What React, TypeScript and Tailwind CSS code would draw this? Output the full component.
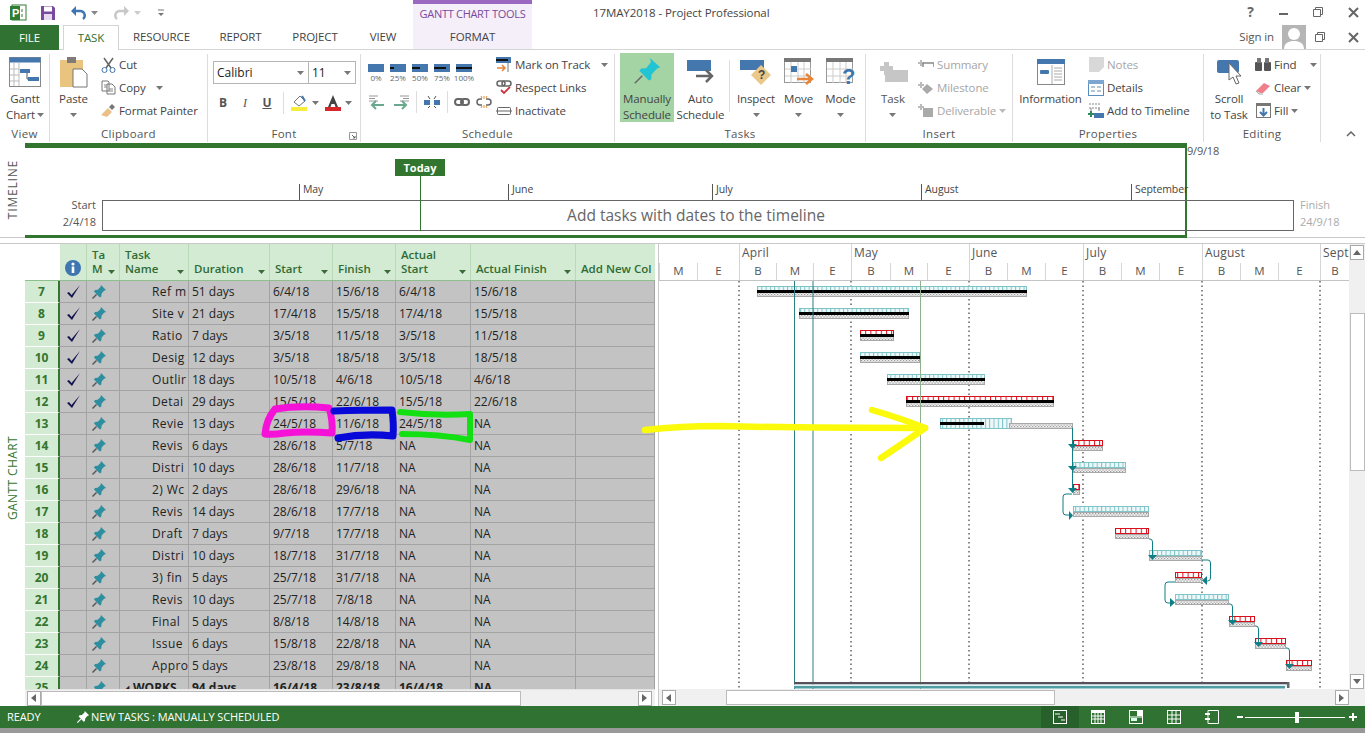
import React from "react";

const BLUE = "#4477ad";

const Caret = ({ c = "#777" }: { c?: string }) => (
  <svg width="7" height="4" viewBox="0 0 7 4" className="shrink-0"><path d="M0 0h7L3.5 4z" fill={c} /></svg>
);

const Large = ({ w, icon, lines, caret, active }: { w: number; icon: React.ReactNode; lines: React.ReactNode[]; caret?: boolean; active?: boolean }) => (
  <div style={{ width: w }} className={`flex flex-col items-center h-[69px] mt-[-1px] shrink-0 ${active ? "bg-[#a4d3a4]" : ""}`}>
    <div className="h-[38px] shrink-0 flex items-center justify-center">{icon}</div>
    <div className="text-[11.5px] leading-[16px] tracking-[-0.1px] text-center whitespace-nowrap">
      {lines.map((l, i) => <div key={i}>{l}</div>)}
      {caret && <div className="flex justify-center h-[16px] items-center"><Caret /></div>}
    </div>
  </div>
);

const Small = ({ icon, label, caret, dim, gap = "gap-[3px]" }: { icon: React.ReactNode; label: string; caret?: React.ReactNode; dim?: boolean; gap?: string }) => (
  <div className={`flex items-center h-[23px] -translate-y-[1px] ${gap} whitespace-nowrap text-[11.5px] tracking-[-0.1px] ${dim ? "text-[#a6a6a6]" : ""}`}>
    <span className="w-[16px] h-[16px] flex items-center justify-center shrink-0">{icon}</span>
    <span>{label}</span>
    {caret}
  </div>
);

const Group = ({ w, label, children, launcher }: { w: number; label: string; children: React.ReactNode; launcher?: boolean }) => (
  <div style={{ width: w }} className="shrink-0 h-[88px] flex flex-col border-r border-[#dcdcdc] mt-[4px] relative">
    <div className="flex h-[72px] items-start">{children}</div>
    <div className="text-[11.5px] leading-[16px] text-center text-[#555] tracking-[0.3px]">{label}</div>
    {launcher && (
      <svg width="8" height="8" viewBox="0 0 8 8" className="absolute right-[3px] bottom-[2px]"><path d="M.5.5h7v7h-7z" fill="none" stroke="#999" /><path d="M3 3l3 3M6 4v2H4" stroke="#666" fill="none" /></svg>
    )}
  </div>
);

const Pin = ({ c = "#2eaab5", s = 16 }: { c?: string; s?: number }) => (
  <svg width={s} height={s} viewBox="0 0 16 16" className="shrink-0">
    <path d="M10 1l5 5-2 .8-2.500 3-.2 2.700-1.500 1L3 7.500l1-1.500 2.700-.2L9.500 3z" fill={c} />
    <path d="M5.500 10.500L1.500 14.500" stroke={c === "#fff" ? "#fff" : "#555"} strokeWidth="1.400" />
  </svg>
);

const Pct = ({ label, dash }: { label: string; dash: number }) => (
  <div className="flex flex-col items-center w-[22px]">
    <svg width="16" height="8" viewBox="0 0 16 8"><rect width="16" height="8" fill={BLUE} />{dash > 0 && <rect y="3" width={dash} height="2" fill="#111" />}</svg>
    <span className="text-[8px] leading-[12px] text-[#666]">{label}</span>
  </div>
);

const Sq = ({ children, cls = "" }: { children: React.ReactNode; cls?: string }) => (
  <div className={`w-[14px] h-[15px] border border-[#aaa] bg-white flex items-center justify-center shrink-0 ${cls}`}>{children}</div>
);

const rows: [number, string, string, string, string, string, string, boolean][] = [
  [7, "Ref m", "51 days", "6/4/18", "15/6/18", "6/4/18", "15/6/18", true],
  [8, "Site v", "21 days", "17/4/18", "15/5/18", "17/4/18", "15/5/18", true],
  [9, "Ratio", "7 days", "3/5/18", "11/5/18", "3/5/18", "11/5/18", true],
  [10, "Desig", "12 days", "3/5/18", "18/5/18", "3/5/18", "18/5/18", true],
  [11, "Outlir", "18 days", "10/5/18", "4/6/18", "10/5/18", "4/6/18", true],
  [12, "Detai", "29 days", "15/5/18", "22/6/18", "15/5/18", "22/6/18", true],
  [13, "Revie", "13 days", "24/5/18", "11/6/18", "24/5/18", "NA", false],
  [14, "Revis", "6 days", "28/6/18", "5/7/18", "NA", "NA", false],
  [15, "Distri", "10 days", "28/6/18", "11/7/18", "NA", "NA", false],
  [16, "2) Wc", "2 days", "28/6/18", "29/6/18", "NA", "NA", false],
  [17, "Revis", "14 days", "28/6/18", "17/7/18", "NA", "NA", false],
  [18, "Draft", "7 days", "9/7/18", "17/7/18", "NA", "NA", false],
  [19, "Distri", "10 days", "18/7/18", "31/7/18", "NA", "NA", false],
  [20, "3) fin", "5 days", "25/7/18", "31/7/18", "NA", "NA", false],
  [21, "Revis", "10 days", "25/7/18", "7/8/18", "NA", "NA", false],
  [22, "Final", "5 days", "8/8/18", "14/8/18", "NA", "NA", false],
  [23, "Issue", "6 days", "15/8/18", "22/8/18", "NA", "NA", false],
  [24, "Appro", "5 days", "23/8/18", "29/8/18", "NA", "NA", false],
];

const cols = "grid grid-cols-[35px_27px_33px_69px_81px_63px_63px_75px_105px_79px]";

const Head = ({ children, cls = "" }: { children: React.ReactNode; cls?: string }) => (
  <div className={`relative border-r border-[#b9d9b9] px-[5px] pb-[4px] flex items-end font-semibold text-[#2f6b35] text-[11.5px] leading-[14px] overflow-hidden bg-[#d3ebd2] ${cls}`}>
    {children}
  </div>
);
const HCaret = () => <span className="absolute right-[4px] bottom-[6px]"><Caret c="#3b6b3b" /></span>;

const Cell = ({ children, bold, cls = "" }: { children?: React.ReactNode; bold?: boolean; cls?: string }) => (
  <div className={`border-r border-b border-[#a3a3a3] px-[3px] flex items-center whitespace-nowrap overflow-hidden text-[12px] text-[#222] ${bold ? "font-bold" : ""} ${cls}`}>
    {children}
  </div>
);

const tiers: { w: number; t: string; m?: string }[] = [
  { w: 38, t: "M" }, { w: 42, t: "E" }, { w: 37, t: "B", m: "April" }, { w: 37, t: "M" }, { w: 38, t: "E" },
  { w: 39, t: "B", m: "May" }, { w: 37, t: "M" }, { w: 42, t: "E" }, { w: 38, t: "B", m: "June" }, { w: 38, t: "M" },
  { w: 38, t: "E" }, { w: 38, t: "B", m: "July" }, { w: 38, t: "M" }, { w: 43, t: "E" }, { w: 38, t: "B", m: "August" },
  { w: 38, t: "M" }, { w: 42, t: "E" }, { w: 29, t: "B", m: "Sept" },
];

type Bar = { x: number; x2: number; y: number; red?: boolean; black?: number };
const bars: Bar[] = [
  { x: 757, x2: 1027, y: 286, black: 1027 },
  { x: 799, x2: 909, y: 308, black: 909 },
  { x: 860, x2: 894, y: 330, red: true, black: 894 },
  { x: 860, x2: 920, y: 352, black: 920 },
  { x: 887, x2: 985, y: 374, black: 985 },
  { x: 906, x2: 1054, y: 396, red: true, black: 1054 },
  { x: 1073, x2: 1103, y: 440, red: true },
  { x: 1073, x2: 1126, y: 462 },
  { x: 1073, x2: 1080, y: 484, red: true },
  { x: 1073, x2: 1149, y: 506 },
  { x: 1115, x2: 1149, y: 528, red: true },
  { x: 1149, x2: 1202, y: 550 },
  { x: 1175, x2: 1202, y: 572, red: true },
  { x: 1175, x2: 1229, y: 594 },
  { x: 1229, x2: 1255, y: 616, red: true },
  { x: 1255, x2: 1286, y: 638, red: true },
  { x: 1286, x2: 1312, y: 660, red: true },
];

const TEAL = "#0f7f86";
const tris = [
  "1068,444 1077,444 1072.5,449", "1068,466 1077,466 1072.5,471", "1068,488 1077,488 1072.5,493",
  "1069,511 1069,520 1073,515.5", "1148,555 1157,555 1152.5,560", "1207,576 1207,585 1202,580.5",
  "1170,598 1170,607 1175,602.5", "1228,620 1237,620 1232.5,625", "1254,642 1263,642 1258.5,647", "1285,664 1294,664 1289.5,669",
];
const links = [
  "M1073 428h-.5V488",
  "M1072 494h-6q-3 0-3 3v15q0 3 3 3h3",
  "M1149 539h1q2.500 0 2.500 3v13",
  "M1202 560h6q2.500 0 2.500 3v15q0 3-3 3h-2",
  "M1175 582h-7q-3 0-3 3v15q0 3 3 3h2",
  "M1229 604h1q2.500 0 2.500 3v13",
  "M1255 626h1q2.500 0 2.500 3v13",
  "M1286 648h1q2.500 0 2.500 3v13",
];

const Chart = () => (
  <svg width="690" height="408" viewBox="659 281 690 408" className="block">
    <defs>
      <pattern id="hT" width="4.3" height="6" patternUnits="userSpaceOnUse" x="757"><rect width="4.3" height="6" fill="#eef8f8" /><rect width="1" height="6" fill="#7fc4c8" /></pattern>
      <pattern id="hR" width="5.2" height="6" patternUnits="userSpaceOnUse" x="860"><rect width="5.2" height="6" fill="#fff" /><rect width="1" height="6" fill="#d8101c" /></pattern>
      <pattern id="dots" width="3" height="3" patternUnits="userSpaceOnUse"><rect width="3" height="3" fill="#f0f0f0" /><rect width="1.2" height="1.2" fill="#9a9a9a" /><rect x="1.500" y="1.500" width="1.200" height="1.200" fill="#9a9a9a" /></pattern>
    </defs>
    {[739, 851, 969, 1083, 1202, 1320].map((x) => <line key={x} x1={x} x2={x} y1="281" y2="689" stroke="#111" strokeDasharray="1.5 3" />)}
    {bars.map((b, i) => {
      const w = b.x2 - b.x;
      return (
        <g key={i}>
          <rect x={b.x + 0.5} y={b.y + 0.5} width={w - 1} height="5" fill={b.red ? "url(#hR)" : "url(#hT)"} stroke={b.red ? "#d8101c" : "#7fc4c8"} />
          <rect x={b.x + 0.5} y={b.y + 6.5} width={w - 1} height="4" fill="url(#dots)" stroke="#a8a8a8" />
          {b.black && <rect x={b.x} y={b.y + 4} width={b.black - b.x} height="3" fill="#000" />}
        </g>
      );
    })}
    <rect x="940.500" y="418.500" width="71" height="10" fill="url(#hT)" stroke="#7fc4c8" />
    <rect x="1009.500" y="423.500" width="63" height="5" fill="url(#dots)" stroke="#a8a8a8" />
    <rect x="940" y="422" width="44" height="3" fill="#000" />
    <line x1="794.500" x2="794.500" y1="281" y2="689" stroke="#2a7f83" />
    <line x1="813" x2="813" y1="281" y2="689" stroke="#2a7f83" />
    <line x1="920.500" x2="920.500" y1="281" y2="689" stroke="#8fb08f" />
    {links.map((d, i) => <path key={i} d={d} fill="none" stroke={TEAL} strokeWidth="1" />)}
    {tris.map((p, i) => <polygon key={i} points={p} fill={TEAL} />)}
    <rect x="794" y="682" width="495" height="2.500" fill="#55505a" />
    <rect x="794" y="684.500" width="495" height="2" fill="#dff3f5" />
    <rect x="794" y="686" width="491" height="2.500" fill="#4f9da3" />
    <rect x="1287" y="682" width="2.500" height="6" fill="#666" />
  </svg>
);

const Ink = () => (
  <svg width="1365" height="733" viewBox="0 0 1365 733" className="absolute left-0 top-0 pointer-events-none" fill="none" strokeLinecap="round" strokeLinejoin="round">
    <path d="M275 409Q300 405 329 408Q333 420 332 433Q305 431 285 433Q272 435 265 434Q266 420 275 409Z" stroke="#f511d8" strokeWidth="7" />
    <path d="M334 411Q360 410 392 410Q394 424 393 436Q365 433 338 438" stroke="#0808d8" strokeWidth="7" />
    <path d="M400 412Q435 416 470 414Q470 428 470 440Q440 434 402 434" stroke="#12e012" strokeWidth="6" />
    <path d="M645 430Q680 426 720 426Q800 428 925 428" stroke="#fafa0a" strokeWidth="6.500" />
    <path d="M872 410Q900 418 925 428Q905 442 881 458" stroke="#fafa0a" strokeWidth="6.500" />
  </svg>
);

const Restore = () => <svg width="10" height="10" viewBox="0 0 10 10"><path d="M.5 2.500h7v7h-7zM2.500 2.500v-2h7v7h-2" fill="none" stroke="#666" /></svg>;
const Close = () => <svg width="11" height="11" viewBox="0 0 11 11"><path d="M1 1l9 9M10 1l-9 9" stroke="#666" strokeWidth="2" /></svg>;

function Caret4({ dir }: { dir: "l" | "r" | "u" | "d" }) {
  const d = { l: "M6 0v8L1 4z", r: "M1 0v8l5-4z", u: "M0 6h8L4 1z", d: "M0 1h8L4 6z" }[dir];
  return <svg width="8" height="8" viewBox="0 0 8 8"><path d={d} fill="#666" /></svg>;
}

export default function App() {
  return (
    <div className="relative w-[1365px] h-[733px] overflow-hidden bg-white text-[#444] font-['Open_Sans','Noto_Sans',sans-serif]">
      {/* title bar */}
      <div className="flex h-[25px] items-center relative">
        <div className="w-[413px] flex items-center pl-[9px] gap-[13px] shrink-0">
          <svg width="18" height="18" viewBox="0 0 18 18"><rect x="3" y="1" width="14" height="15" fill="#fff" stroke="#2f7d32" /><rect x="1" y="2" width="10" height="14" fill="#2f7d32" /><text x="3" y="13" fontSize="11" fontWeight="700" fill="#fff" fontFamily="Liberation Sans">P</text><path d="M13 5v3M13 10v3" stroke="#2f7d32" /></svg>
          <svg width="16" height="16" viewBox="0 0 16 16"><path d="M1 1h12l2 2v12H1z" fill="#7a4a9e" /><rect x="4" y="1.500" width="8" height="5" fill="#fff" /><rect x="4" y="9" width="8" height="6" fill="#e7dcef" /></svg>
          <div className="flex items-center gap-[4px] ml-[1px]">
            <svg width="17" height="15" viewBox="0 0 17 15"><path d="M4 6h6a4.500 4.500 0 0 1 3 8" fill="none" stroke="#3d76b0" strokeWidth="2.500" /><path d="M6 1L1 6l5 5z" fill="#3d76b0" /></svg>
            <Caret c="#888" />
          </div>
          <div className="flex items-center gap-[4px] ml-[2px]">
            <svg width="17" height="15" viewBox="0 0 17 15"><path d="M13 6H7a4.500 4.500 0 0 0-3 8" fill="none" stroke="#c8c8c8" strokeWidth="2.500" /><path d="M11 1l5 5-5 5z" fill="#c8c8c8" /></svg>
            <Caret c="#ccc" />
          </div>
          <svg width="8" height="8" viewBox="0 0 8 8" className="ml-[3px]"><path d="M1 1h6" stroke="#777" /><path d="M1 4h6L4 7z" fill="#777" /></svg>
        </div>
        <div className="w-[119px] h-[25px] bg-[#f4eff9] border-t-[4px] border-[#9a68c0] text-[#7a4a9e] text-[11px] tracking-[-0.3px] leading-[20px] text-center whitespace-nowrap shrink-0">GANTT CHART TOOLS</div>
        <div className="ml-[61px] text-[11.5px] tracking-[-0.1px] text-[#444] whitespace-nowrap">17MAY2018 - Project Professional</div>
        <div className="absolute right-[6px] top-[3px] flex items-center gap-[25px] text-[#666]">
          <span className="font-bold text-[14px] leading-[18px]">?</span>
          <span className="w-[9px] h-[2px] bg-[#666] mt-[4px]"></span>
          <Restore />
          <Close />
        </div>
      </div>

      {/* tabs */}
      <div className="flex h-[25px] border-b border-[#d4d4d4] text-[11.5px] tracking-[-0.1px] text-[#444] relative">
        <div className="w-[59px] h-[25px] bg-[#2f7232] text-white flex items-center justify-center shrink-0">FILE</div>
        <div className="w-[56px] ml-[4px] h-[25px] border border-b-0 border-[#d4d4d4] bg-white text-[#2f7232] flex items-center justify-center shrink-0 z-10">TASK</div>
        <div className="w-[85px] flex items-center justify-center shrink-0">RESOURCE</div>
        <div className="w-[73px] flex items-center justify-center shrink-0">REPORT</div>
        <div className="w-[76px] flex items-center justify-center shrink-0">PROJECT</div>
        <div className="w-[60px] flex items-center justify-center shrink-0">VIEW</div>
        <div className="w-[119px] bg-[#f4eff9] flex items-center justify-center shrink-0">FORMAT</div>
        <div className="absolute right-[6px] top-0 h-[24px] flex items-center text-[#555]">
          <span className="mr-[8px]">Sign in</span>
          <div className="w-[24px] h-[24px] bg-[#b5b5b5] overflow-hidden flex justify-center mr-[9px] relative">
            <svg width="24" height="24" viewBox="0 0 24 24"><circle cx="12" cy="9" r="6" fill="#fff" /><path d="M2 24c0-6 5-8 10-8s10 2 10 8z" fill="#fff" /></svg>
          </div>
          <span className="mr-[23px]"><Restore /></span>
          <Close />
        </div>
      </div>

      {/* ribbon */}
      <div className="flex h-[93px] relative">
        <Group w={50} label="View">
          <Large w={50} lines={["Gantt", <span className="inline-flex items-center gap-[2px]">Chart<Caret /></span>]} icon={
            <svg width="32" height="30" viewBox="0 0 32 30"><rect x=".5" y=".5" width="31" height="29" fill="#fff" stroke="#888" /><rect x=".5" y=".5" width="31" height="5" fill={BLUE} /><path d="M5 6v23M10 6v23M1 12h9M1 18h9M1 24h9" stroke="#bbb" /><rect x="11" y="12" width="10" height="4" fill={BLUE} /><rect x="19" y="20" width="11" height="4" fill={BLUE} /><path d="M18 16v6h1" stroke="#555" fill="none" /></svg>
          } />
        </Group>
        <Group w={158} label="Clipboard">
          <Large w={47} lines={["Paste"]} caret icon={
            <svg width="30" height="32" viewBox="0 0 30 32"><rect x="1" y="4" width="23" height="27" fill="#e8c47e" /><rect x="8" y="1" width="9" height="6" fill="#807a78" /><path d="M14 13h9l5 5v13H14z" fill="#fff" stroke="#777" /></svg>
          } />
          <div className="flex flex-col pl-[3px]">
            <Small label="Cut" icon={<svg width="15" height="16" viewBox="0 0 15 16"><path d="M3 1l7 10M12 1L5 11" stroke="#666" strokeWidth="1.500" /><circle cx="3.500" cy="13" r="2.500" fill="none" stroke={BLUE} /><circle cx="11.500" cy="13" r="2.500" fill="none" stroke={BLUE} /></svg>} />
            <Small label="Copy" caret={<span className="ml-[7px]"><Caret /></span>} icon={<svg width="15" height="15" viewBox="0 0 15 15"><path d="M1 1h6l1 1v9H1zM6 4h5l3 3v7H6z" fill="#fff" stroke="#777" /><path d="M3 5h3M3 7h3M8 9h4M8 11h4" stroke="#888" /></svg>} />
            <Small label="Format Painter" icon={<svg width="16" height="15" viewBox="0 0 16 15"><path d="M1 12l7-7 4 4-5 5z" fill="#e9c088" /><path d="M9 4l3-3 3 3-3 3z" fill="#777" /></svg>} />
          </div>
        </Group>
        <Group w={153} label="Font" launcher>
          <div className="flex flex-col w-full pl-[5px] pt-[7px]">
            <div className="flex h-[23px] w-[143px] border border-[#b5b5b5] text-[12px] text-[#222]">
              <div className="w-[95px] border-r border-[#b5b5b5] flex items-center justify-between pl-[3px] pr-[4px]">Calibri<Caret /></div>
              <div className="flex-1 flex items-center justify-between pl-[3px] pr-[4px]">11<Caret /></div>
            </div>
            <div className="flex items-center h-[24px] mt-[7px] text-[12px] text-[#555] font-bold">
              <span className="w-[20px] text-center">B</span>
              <span className="w-[24px] text-center italic font-normal font-['Liberation_Serif',serif]">I</span>
              <span className="w-[20px] text-center underline">U</span>
              <span className="w-[1px] h-[22px] bg-[#ddd] ml-[6px] mr-[7px]"></span>
              <svg width="17" height="18" viewBox="0 0 17 18"><path d="M3 8l6-6 5 5-6 5z" fill="#fff" stroke="#777" /><path d="M11 2l3 5" stroke={BLUE} strokeWidth="2" /><rect y="13" width="16" height="4" fill="#f7ed3b" /></svg>
              <span className="ml-[4px]"><Caret /></span>
              <svg width="16" height="18" viewBox="0 0 16 18" className="ml-[6px]"><path d="M8 1L3 13h2.500l1-3h3l1 3H13z" fill="#444" /><rect y="13" width="16" height="4" fill="#d7262c" /></svg>
              <span className="ml-[4px]"><Caret /></span>
            </div>
          </div>
        </Group>
        <Group w={254} label="Schedule">
          <div className="flex flex-col pt-[10px] w-[122px] ml-[-1px] pl-[5px] shrink-0">
            <div className="flex h-[25px]">
              <Pct label="0%" dash={0} /><Pct label="25%" dash={4} /><Pct label="50%" dash={8} /><Pct label="75%" dash={12} /><Pct label="100%" dash={16} />
            </div>
            <div className="flex items-center h-[22px] mt-[2px] pl-[3px]">
              <svg width="18" height="15" viewBox="0 0 18 15" className="shrink-0"><path d="M1 1h9M1 3.500h6M1 6h9" stroke="#999" /><path d="M16 10H4M8 6l-4 4 4 4" fill="none" stroke="#6aa88d" strokeWidth="2" /></svg>
              <svg width="18" height="15" viewBox="0 0 18 15" className="ml-[6px] shrink-0"><path d="M8 1h9M11 3.500h6M8 6h9" stroke="#999" /><path d="M2 10h12M10 6l4 4-4 4" fill="none" stroke="#6aa88d" strokeWidth="2" /></svg>
              <span className="w-[1px] h-[22px] bg-[#ddd] ml-[6px] mr-[7px] shrink-0"></span>
              <svg width="16" height="14" viewBox="0 0 16 14" className="shrink-0"><rect y="5" width="6" height="5" fill={BLUE} /><rect x="10" y="5" width="6" height="5" fill={BLUE} /><path d="M4 1l2 3M12 1l-2 3M4 13l2-2M12 13l-2-2" stroke="#555" /></svg>
              <span className="w-[1px] h-[22px] bg-[#ddd] ml-[7px] mr-[6px] shrink-0"></span>
              <svg width="16" height="10" viewBox="0 0 16 10" className="shrink-0"><rect x="1" y="2" width="8" height="6" rx="3" fill="none" stroke="#666" strokeWidth="2" /><rect x="7" y="2" width="8" height="6" rx="3" fill="none" stroke="#666" strokeWidth="2" /></svg>
              <svg width="16" height="14" viewBox="0 0 16 14" className="ml-[6px] shrink-0"><path d="M6 4H4a3 3 0 0 0 0 6h2M10 4h2a3 3 0 0 1 0 6h-2" fill="none" stroke="#666" strokeWidth="1.500" /><path d="M8 1v3M5 1l1 2M11 1l-1 2M8 10v3M5 13l1-2M11 13l-1-2" stroke="#e28a2f" /></svg>
            </div>
          </div>
          <div className="flex flex-col pl-[14px]">
            <Small label="Mark on Track" caret={<span className="ml-[8px]"><Caret /></span>} icon={<svg width="16" height="15" viewBox="0 0 16 15"><rect width="15" height="6" fill={BLUE} /><rect y="2" width="12" height="2" fill="#111" /><path d="M1 11h7M6 8l3 3-3 3" fill="none" stroke="#e4863a" strokeWidth="1.500" /><path d="M12 6v9" stroke="#777" /></svg>} />
            <Small label="Respect Links" icon={<svg width="16" height="15" viewBox="0 0 16 15"><rect x="1" y="1" width="8" height="5" rx="2.500" fill="none" stroke="#666" strokeWidth="1.500" /><rect x="6" y="1" width="9" height="5" rx="2.500" fill="none" stroke="#666" strokeWidth="1.500" /><path d="M5 10l3 3 6-6" fill="none" stroke="#c9363f" strokeWidth="1.800" /></svg>} />
            <Small label="Inactivate" icon={<svg width="16" height="10" viewBox="0 0 16 10"><rect x="1.500" y="1.500" width="13" height="7" rx="1" fill="none" stroke="#666" /><path d="M0 5h16" stroke="#666" /></svg>} />
          </div>
        </Group>
        <Group w={251} label="Tasks">
          <div className="pl-[5px] flex">
            <Large w={54} active lines={["Manually", "Schedule"]} icon={
              <svg width="30" height="32" viewBox="0 0 16 17"><path d="M9.500 1l5.500 5-1.600.6-3 3.200-.1 2.600-1.300.6L3.900 7.800l1-1.200 2.600-.1 2.600-3.200z" fill="#22c4d4" /><path d="M5.500 10.500L1.500 14.500" stroke="#666" strokeWidth=".8" /></svg>
            } />
            <Large w={53} lines={["Auto", "Schedule"]} icon={
              <svg width="28" height="24" viewBox="0 0 28 24"><rect width="24" height="11" fill={BLUE} /><path d="M9 16h16M19 10l6 6-6 6" fill="none" stroke="#666" strokeWidth="2.500" /></svg>
            } />
          </div>
          <span className="w-[1px] h-[52px] bg-[#ddd] mt-[6px] mx-[2px]"></span>
          <Large w={48} lines={["Inspect"]} caret icon={
            <svg width="32" height="28" viewBox="0 0 32 28"><rect y="2" width="24" height="10" fill={BLUE} /><path d="M21 7l10 10-10 10-10-10z" fill="#e9c88a" /><text x="18" y="21" fontSize="12" fontWeight="700" fill="#444" fontFamily="Liberation Sans">?</text></svg>
          } />
          <Large w={37} lines={["Move"]} caret icon={
            <svg width="30" height="28" viewBox="0 0 30 28"><rect x=".5" y=".5" width="26" height="24" fill="#fff" stroke="#999" /><rect width="27" height="4" fill="#777" /><path d="M7 4v21M14 4v21M20 4v21M1 11h26M1 18h26" stroke="#ccc" /><rect x="7" y="8" width="6" height="6" fill={BLUE} /><path d="M13 21h14M22 16l6 5-6 5" fill="none" stroke="#e8853a" strokeWidth="2.500" /></svg>
          } />
          <Large w={47} lines={["Mode"]} caret icon={
            <svg width="30" height="28" viewBox="0 0 30 28"><rect x=".5" y=".5" width="26" height="24" fill="#fff" stroke="#999" /><rect width="27" height="4" fill="#777" /><path d="M7 4v21M14 4v21M20 4v21M1 11h26M1 18h26" stroke="#ccc" /><text x="16" y="26" fontSize="22" fontWeight="700" fill="#3d76b0" fontFamily="Liberation Sans">?</text></svg>
          } />
        </Group>
        <Group w={147} label="Insert">
          <div className="w-[53px] shrink-0 pl-[1px]">
            <Large w={52} lines={[<span className="text-[#555]">Task</span>]} caret icon={
              <svg width="29" height="22" viewBox="0 0 29 22"><path d="M5 1h5v4h4v5h-4v4H5v-4H1V5h4z" fill="#c6c6c6" /><rect x="6" y="9" width="23" height="12" fill="#c6c6c6" /></svg>
            } />
          </div>
          <div className="flex flex-col ml-[-1px]">
            <Small dim label="Summary" icon={<svg width="16" height="12" viewBox="0 0 16 12"><path d="M2 1h2v2h2v2H4v2H2V5H0V3h2z" fill="#bbb" /><path d="M5 4h11v4M5 4v4" fill="none" stroke="#888" strokeWidth="1.500" /></svg>} />
            <Small dim label="Milestone" icon={<svg width="16" height="14" viewBox="0 0 16 14"><path d="M2 1h2v2h2v2H4v2H2V5H0V3h2z" fill="#bbb" /><path d="M9 3l6 5-6 5-5-5z" fill="#aaa" /></svg>} />
            <Small dim caret={<Caret c="#bbb" />} label="Deliverable" icon={<svg width="16" height="15" viewBox="0 0 16 15"><path d="M2 1h2v2h2v2H4v2H2V5H0V3h2z" fill="#bbb" /><rect x="5" y="5" width="10" height="9" fill="#aaa" /></svg>} />
          </div>
        </Group>
        <Group w={191} label="Properties">
          <Large w={75} lines={["Information"]} icon={
            <svg width="28" height="26" viewBox="0 0 28 26"><rect x=".5" y=".5" width="27" height="25" fill="#fff" stroke="#888" /><rect width="28" height="5" fill={BLUE} /><rect x="3" y="11" width="9" height="4" rx="1" fill={BLUE} /><path d="M15 6v19M17 9h8M17 12h8M17 15h8M17 18h8M17 21h8" stroke="#aaa" /></svg>
          } />
          <div className="flex flex-col">
            <Small dim label="Notes" gap="gap-[3px]" icon={<svg width="15" height="15" viewBox="0 0 15 15"><path d="M0 0h15v10l-5 5H0z" fill="#d8d8d8" /></svg>} />
            <Small label="Details" gap="gap-[3px]" icon={<svg width="16" height="16" viewBox="0 0 16 16"><rect x=".5" y=".5" width="15" height="15" fill="#fff" stroke="#5a8cc0" /><rect width="16" height="4" fill="#7da6d0" /><path d="M3 7h4M9 7h4M3 11h4M9 11h4" stroke="#6a8cb0" /></svg>} />
            <Small label="Add to Timeline" gap="gap-[3px]" icon={<svg width="16" height="16" viewBox="0 0 16 16"><path d="M1 1h12M1 5h12" stroke="#888" strokeDasharray="2 1" /><path d="M3 5v5M11 5v3" stroke="#888" /><rect x="6" y="10" width="10" height="5" fill={BLUE} /><path d="M0 11h6M3 8v6" stroke="#2f8c5a" strokeWidth="2" /></svg>} />
          </div>
        </Group>
        <Group w={117} label="Editing">
          <Large w={50} lines={["Scroll", "to Task"]} icon={
            <svg width="28" height="30" viewBox="0 0 28 30"><rect x="2" y="3" width="22" height="13" rx="2" fill={BLUE} /><path d="M14 6v17l4-3 3 7 3-1-3-7h5z" fill="#fff" stroke="#666" /></svg>
          } />
          <div className="flex flex-col pl-[1px]">
            <Small label="Find" caret={<span className="ml-[10px]"><Caret /></span>} icon={<svg width="16" height="13" viewBox="0 0 16 13"><rect y="4" width="7" height="9" rx="1" fill="#555" /><rect x="9" y="4" width="7" height="9" rx="1" fill="#555" /><rect x="2" y="0" width="4" height="5" fill="#777" /><rect x="10" y="0" width="4" height="5" fill="#777" /></svg>} />
            <Small label="Clear" caret={<Caret />} icon={<svg width="16" height="14" viewBox="0 0 16 14"><path d="M1 10l8-8 6 3-7 7H4z" fill="#ef7f8a" /><path d="M1 10l3 3h4" fill="#eee" stroke="#aaa" /></svg>} />
            <Small label="Fill" caret={<Caret />} icon={<svg width="15" height="15" viewBox="0 0 15 15"><rect x=".5" y=".5" width="14" height="14" fill="#fff" stroke="#777" /><rect width="15" height="3" fill="#777" /><path d="M7.500 5v7M4 9l3.500 3.500L11 9" fill="none" stroke={BLUE} strokeWidth="2" /></svg>} />
          </div>
        </Group>
        <svg width="10" height="6" viewBox="0 0 10 6" className="absolute right-[9px] bottom-[6px]"><path d="M1 5l4-4 4 4" fill="none" stroke="#666" strokeWidth="1.500" /></svg>
      </div>

      {/* timeline */}
      <div className="flex h-[95px] border-b border-[#c9c9c9] relative">
        <div className="w-[25px] flex items-center justify-center text-[12px] text-[#555] tracking-[0.8px]"><span className="[writing-mode:vertical-rl] rotate-180">TIMELINE</span></div>
        <div className="w-[1162px] h-[95px] border-t-[5px] border-b-[3px] border-r-2 border-[#31752f] shrink-0"></div>
        <span className="absolute left-[1187px] top-[0px] text-[11px] tracking-[-0.2px] text-[#555]">9/9/18</span>
        <div className="absolute left-[0] w-[96px] top-[53px] text-right text-[11px] leading-[17px] text-[#555]"><div>Start</div><div>2/4/18</div></div>
        <div className="absolute left-[102px] top-[57px] w-[1192px] h-[31px] border border-[#666] flex items-center justify-center text-[15.5px] text-[#666] pr-[4px]">Add tasks with dates to the timeline</div>
        <div className="absolute left-[395px] top-[16px] w-[50px] h-[17px] bg-[#31752f] text-white text-[11px] font-bold leading-[17px] text-center">Today</div>
        <div className="absolute left-[420px] top-[33px] w-[1px] h-[55px] bg-[#31752f]"></div>
        {[["May", "left-[299px]"], ["June", "left-[508px]"], ["July", "left-[712px]"], ["August", "left-[921px]"], ["September", "left-[1131px]"]].map(([t, l]) => (
          <div key={t} className={`absolute top-[41px] h-[16px] border-l border-[#555] pl-[3px] text-[10.5px] tracking-[-0.1px] leading-[10px] text-[#444] ${l}`}>{t}</div>
        ))}
        <div className="absolute left-[1300px] top-[53px] text-[11px] leading-[17px] text-[#aaa]"><div>Finish</div><div>24/9/18</div></div>
      </div>

      {/* main */}
      <div className="flex h-[463px] mt-[5px] border-t border-[#c9c9c9]">
        <div className="w-[25px] shrink-0 flex items-center justify-center text-[12px] text-[#31752f] tracking-[0.4px] pt-[6px]"><span className="[writing-mode:vertical-rl] rotate-180">GANTT CHART</span></div>
        <div className="w-[630px] shrink-0 flex flex-col">
          <div className="h-[445px] overflow-hidden">
            <div className={`${cols} h-[37px] border-b border-[#8fbf8f]`}>
              <div className="bg-white"></div>
              <Head cls="items-center justify-center pb-0">
                <svg width="16" height="16" viewBox="0 0 16 16" className="shrink-0"><circle cx="8" cy="8" r="8" fill="#3d76b0" /><rect x="6.700" y="6.500" width="2.600" height="6.500" fill="#fff" /><circle cx="8" cy="4" r="1.600" fill="#fff" /></svg>
              </Head>
              <Head cls="whitespace-nowrap"><div>Ta<br />M</div><HCaret /></Head>
              <Head><div>Task<br />Name</div><HCaret /></Head>
              <Head>Duration<HCaret /></Head>
              <Head>Start<HCaret /></Head>
              <Head>Finish<HCaret /></Head>
              <Head><div>Actual<br />Start</div><HCaret /></Head>
              <Head cls="whitespace-nowrap">Actual Finish<HCaret /></Head>
              <Head cls="whitespace-nowrap border-r-0">Add New Col</Head>
            </div>
            {rows.map((r) => (
              <div key={r[0]} className={`${cols} h-[22px] bg-[#c3c3c3]`}>
                <div className="bg-[#d3ebd2] border-b border-white border-r-2 border-r-[#31752f] flex items-center justify-center font-bold text-[12px] text-[#31752f]">{r[0]}</div>
                <Cell cls="justify-center">
                  {r[7] && <svg width="15" height="14" viewBox="0 0 15 14"><path d="M1 8l2-1 2.500 3L14 0 6 13z" fill="#14144f" /></svg>}
                </Cell>
                <Cell cls="justify-start pl-[4px]"><Pin c="#2d8ea0" /></Cell>
                <Cell cls="pl-[32px] tracking-[0.4px]">{r[1]}</Cell>
                <Cell>{r[2]}</Cell>
                <Cell>{r[3]}</Cell>
                <Cell>{r[4]}</Cell>
                <Cell>{r[5]}</Cell>
                <Cell>{r[6]}</Cell>
                <Cell />
              </div>
            ))}
            <div className={`${cols} h-[22px] bg-[#c3c3c3]`}>
              <div className="bg-[#d3ebd2] border-r-2 border-r-[#31752f] flex items-center justify-center font-bold text-[12px] text-[#31752f]">25</div>
              <Cell />
              <Cell cls="pl-[4px]"><Pin c="#2d8ea0" /></Cell>
              <Cell bold cls="pl-[3px] gap-[4px]"><span className="text-[8px]">◢</span>WORKS</Cell>
              <Cell bold>94 days</Cell>
              <Cell bold>16/4/18</Cell>
              <Cell bold>23/8/18</Cell>
              <Cell bold>16/4/18</Cell>
              <Cell bold>NA</Cell>
              <Cell />
            </div>
          </div>
          <div className="h-[17px] flex items-center pl-[2px] bg-[#f0f0f0] border-t border-[#e5e5e5]">
            <Sq><Caret4 dir="l" /></Sq>
            <div className="w-[480px] h-[15px] bg-white border border-[#bbb]"></div>
            <div className="flex-1"></div>
            <Sq cls="mr-[3px]"><Caret4 dir="r" /></Sq>
          </div>
        </div>
        <div className="w-[4px] shrink-0 bg-white border-r border-[#c9c9c9]"></div>
        <div className="w-[690px] shrink-0 flex flex-col">
          <div className="h-[37px] border-b border-[#c4c4c4] flex text-[12px] text-[#555] overflow-hidden">
            {tiers.map((t, i) => (
              <div key={i} style={{ width: t.w }} className="shrink-0 flex flex-col relative">
                <div className={`h-[19px] whitespace-nowrap leading-[17px] pl-[2px] tracking-[0.2px] ${t.m ? "border-l border-[#d5d5d5]" : ""}`}>{t.m ?? ""}</div>
                <div className="flex-1 border-l border-[#d5d5d5] flex items-center justify-center text-[11.5px] leading-none pb-[2px]">{t.t}</div>
              </div>
            ))}
          </div>
          <div className="h-[408px]"><Chart /></div>
          <div className="h-[17px] flex items-center bg-[#f0f0f0] pl-[3px]">
            <Sq><Caret4 dir="l" /></Sq>
            <div className="w-[50px]"></div>
            <div className="w-[329px] h-[15px] bg-white border border-[#bbb]"></div>
            <div className="flex-1"></div>
            <Sq><Caret4 dir="r" /></Sq>
          </div>
        </div>
        <div className="w-[16px] shrink-0 bg-[#f0f0f0] flex flex-col items-center pt-[1px] relative">
          <Sq><Caret4 dir="u" /></Sq>
          <div className="w-[15px] h-[158px] bg-white border border-[#bbb] mt-[53px]"></div>
          <div className="flex-1"></div>
          <Sq cls="mb-[17px]"><Caret4 dir="d" /></Sq>
        </div>
      </div>

      {/* status */}
      <div className="flex items-center h-[22px] bg-[#2f7232] text-white text-[11px] tracking-[-0.1px] relative">
        <span className="ml-[7px] w-[69px]">READY</span>
        <Pin c="#fff" s={14} />
        <span className="ml-[1px] whitespace-nowrap">NEW TASKS : MANUALLY SCHEDULED</span>
        <div className="absolute left-[1041px] top-0 h-[22px] flex items-center">
          <div className="w-[38px] h-[22px] bg-[#27602a] flex items-center justify-center">
            <svg width="14" height="14" viewBox="0 0 14 14"><rect x=".5" y=".5" width="13" height="13" fill="none" stroke="#fff" /><path d="M2 4h5M5 7h5M8 10h4" stroke="#fff" /></svg>
          </div>
          <div className="w-[38px] flex justify-center">
            <svg width="14" height="14" viewBox="0 0 14 14"><rect x=".5" y=".5" width="13" height="13" fill="none" stroke="#fff" /><rect width="14" height="3" fill="#fff" /><path d="M1 6h12M1 9h12M4 3v10M7 3v10M10 3v10" stroke="#fff" /></svg>
          </div>
          <div className="w-[38px] flex justify-center">
            <svg width="14" height="14" viewBox="0 0 14 14"><rect x=".5" y=".5" width="13" height="13" fill="none" stroke="#fff" /><rect x="8" y="1" width="5" height="5" fill="#fff" /><path d="M1 7h12" stroke="#fff" /><rect x="2" y="8" width="6" height="3" fill="#dfe" /></svg>
          </div>
          <div className="w-[38px] flex justify-center">
            <svg width="14" height="14" viewBox="0 0 14 14"><rect x=".5" y=".5" width="13" height="13" fill="none" stroke="#fff" /><path d="M1 5h12M1 9h12M5 1v12M9 1v12" stroke="#fff" /></svg>
          </div>
          <div className="w-[38px] flex justify-center">
            <svg width="14" height="14" viewBox="0 0 14 14"><path d="M3 .5h10.500v13H3z" fill="none" stroke="#fff" /><path d="M0 4h5M0 9h5" stroke="#fff" strokeWidth="2" /></svg>
          </div>
          <span className="w-[6px] h-[2px] bg-white ml-[6px]"></span>
          <div className="w-[100px] h-[1px] bg-white ml-[2px] relative">
            <span className="absolute left-[50px] top-[-5px] w-[4px] h-[11px] bg-white"></span>
          </div>
          <svg width="8" height="8" viewBox="0 0 8 8" className="ml-[4px]"><path d="M0 4h8M4 0v8" stroke="#fff" strokeWidth="2" /></svg>
        </div>
      </div>
      <div className="h-[5px] bg-[#999]"></div>

      <Ink />
    </div>
  );
}
